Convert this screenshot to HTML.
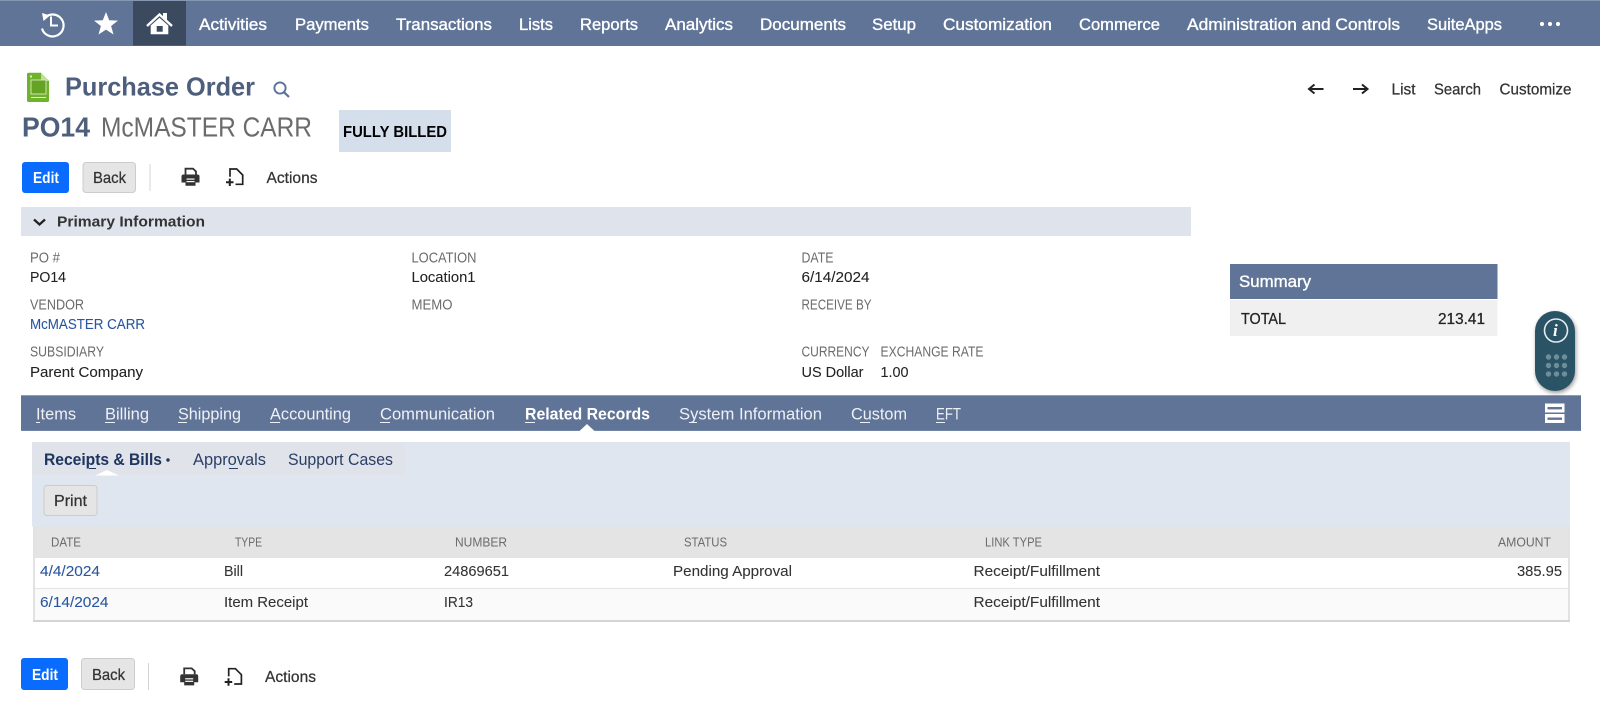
<!DOCTYPE html>
<html lang="en">
<head>
<meta charset="utf-8">
<title>Purchase Order PO14</title>
<style>
html,body{margin:0;padding:0;background:#fff;width:1600px;height:719px;overflow:hidden}
svg{display:block}
text{font-family:"Liberation Sans",Arial,sans-serif}
.nav{font-size:16.8px;fill:#fff;stroke:#fff;stroke-width:.35px}
.tb{font-size:15.8px;fill:#333;stroke:#333;stroke-width:.25px}
.lab{font-size:14.6px;fill:#6b6b6b}
.val{font-size:15.2px;fill:#222;stroke:#222;stroke-width:.08px}
.lnk{font-size:15.2px;fill:#2a56a0;stroke:#2a56a0;stroke-width:.08px}
.tab{font-size:16.8px;fill:#eef1f6}
.sub{font-size:16.8px;fill:#2a3f66}
.th{font-size:13px;fill:#6b6b6b}
.td{font-size:15.2px;fill:#333;stroke:#333;stroke-width:.08px}
</style>
</head>
<body>
<svg xmlns="http://www.w3.org/2000/svg" width="1600" height="719" viewBox="0 0 1600 719">
<rect width="1600" height="719" fill="#fff"/>

<!-- Top navigation -->
<rect x="0" y="0" width="1600" height="46" fill="#607497"/>
<rect x="0" y="0" width="1600" height="1" fill="#8697b2"/>
<rect x="133" y="1" width="53" height="44.5" fill="#3c4a60"/>
<g fill="none" stroke="#fff" stroke-width="2.2">
  <path d="M44.5 18 A11 11 0 1 1 42 28.5"/>
  <path d="M51 16.5 V25.5 H58" stroke-width="2"/>
</g>
<path d="M42 13 L50 15.5 L43.5 21 Z" fill="#fff"/>
<polygon fill="#fff" points="106,12 109.2,20.2 118,20.6 111.1,26 113.5,34.5 106,29.6 98.5,34.5 100.9,26 94,20.6 102.8,20.2"/>
<path d="M163 13 H167 V21 L163 17 Z" fill="#fff"/>
<path d="M147 26 L159.5 14.5 L172 26" fill="none" stroke="#fff" stroke-width="2.4"/>
<path d="M150.7 25.5 L159.5 17.8 L168.3 25.5 V34.3 H150.7 Z" fill="#fff"/>
<rect x="156.7" y="26" width="6" height="5.7" fill="#3c4a60"/>
<text class="nav" x="199" y="30" textLength="68" lengthAdjust="spacingAndGlyphs">Activities</text>
<text class="nav" x="295" y="30" textLength="74" lengthAdjust="spacingAndGlyphs">Payments</text>
<text class="nav" x="396" y="30" textLength="96" lengthAdjust="spacingAndGlyphs">Transactions</text>
<text class="nav" x="519" y="30" textLength="34" lengthAdjust="spacingAndGlyphs">Lists</text>
<text class="nav" x="580" y="30" textLength="58" lengthAdjust="spacingAndGlyphs">Reports</text>
<text class="nav" x="665" y="30" textLength="68" lengthAdjust="spacingAndGlyphs">Analytics</text>
<text class="nav" x="760" y="30" textLength="86" lengthAdjust="spacingAndGlyphs">Documents</text>
<text class="nav" x="872" y="30" textLength="44" lengthAdjust="spacingAndGlyphs">Setup</text>
<text class="nav" x="943" y="30" textLength="109" lengthAdjust="spacingAndGlyphs">Customization</text>
<text class="nav" x="1079" y="30" textLength="81" lengthAdjust="spacingAndGlyphs">Commerce</text>
<text class="nav" x="1187" y="30" textLength="213" lengthAdjust="spacingAndGlyphs">Administration and Controls</text>
<text class="nav" x="1427" y="30" textLength="75" lengthAdjust="spacingAndGlyphs">SuiteApps</text>
<g fill="#fff"><circle cx="1542" cy="24" r="2.1"/><circle cx="1550" cy="24" r="2.1"/><circle cx="1558" cy="24" r="2.1"/></g>

<!-- Title block -->
<path d="M28.5 72.7 H41 L49 81 V100.5 a1.5 1.5 0 0 1 -1.5 1.5 H28.5 a1.5 1.5 0 0 1 -1.5 -1.5 V74.2 a1.5 1.5 0 0 1 1.5 -1.5Z" fill="#6fb22c"/>
<path d="M41 72.7 L49 81 H41Z" fill="#c3dc9b"/>
<rect x="30" y="75.5" width="2" height="2" fill="#e4f0d0"/>
<rect x="31" y="80" width="15" height="14" fill="#64a324" stroke="#cfe4ad" stroke-width="1"/>
<rect x="31" y="97" width="15" height="1" fill="#e4f0d0"/>
<text x="65" y="95.5" font-size="26" font-weight="700" fill="#4d5f7d" textLength="190" lengthAdjust="spacingAndGlyphs">Purchase Order</text>
<circle cx="280" cy="88" r="5.6" fill="none" stroke="#5a7199" stroke-width="1.9"/>
<path d="M284 92.2 L289 97" stroke="#5a7199" stroke-width="2.2" fill="none"/>
<text x="22" y="136.5" font-size="27.5" font-weight="700" fill="#4d5f7d" textLength="68" lengthAdjust="spacingAndGlyphs">PO14</text>
<text x="101" y="136.5" font-size="27.5" fill="#6b6b6b" textLength="211" lengthAdjust="spacingAndGlyphs">McMASTER CARR</text>
<rect x="339" y="110" width="112" height="42" fill="#d5dfec"/>
<text x="343" y="137" font-size="15.8" font-weight="700" fill="#000" textLength="104" lengthAdjust="spacingAndGlyphs">FULLY BILLED</text>

<path d="M1309 89 H1323.5 M1314.5 84.5 L1309 89 L1314.5 93.5" fill="none" stroke="#222" stroke-width="2"/>
<path d="M1353 89 H1367.5 M1362 84.5 L1367.5 89 L1362 93.5" fill="none" stroke="#222" stroke-width="2"/>
<text class="tb" x="1391.5" y="94.5" textLength="24" lengthAdjust="spacingAndGlyphs">List</text>
<text class="tb" x="1434" y="94.5" textLength="47" lengthAdjust="spacingAndGlyphs">Search</text>
<text class="tb" x="1499.5" y="94.5" textLength="72" lengthAdjust="spacingAndGlyphs">Customize</text>

<!-- Top toolbar -->
<rect x="22" y="162" width="47" height="31" rx="3" fill="#0a6cff"/>
<text x="33" y="183" font-size="15.8" font-weight="700" fill="#fff" textLength="26" lengthAdjust="spacingAndGlyphs">Edit</text>
<rect x="83" y="162.5" width="52.5" height="30" rx="3" fill="#e5e5e5" stroke="#ccc"/>
<text class="tb" x="93" y="183" textLength="33" lengthAdjust="spacingAndGlyphs">Back</text>
<rect x="149.5" y="164" width="1" height="27" fill="#d5d5d5"/>
<g>
  <path d="M185.5 174.5 V168.7 H193 L196 171.5 V174.5" fill="none" stroke="#333" stroke-width="1.8"/>
  <path d="M183.5 174.5 H197.5 a2 2 0 0 1 2 2 V182.5 H195.5 V185.7 H185.5 V182.5 H181.5 V176.5 a2 2 0 0 1 2 -2Z" fill="#333"/>
  <rect x="186.5" y="178.5" width="8" height="1.2" fill="#fff"/>
  <rect x="186.5" y="181" width="8" height="1.2" fill="#fff"/>
  <path d="M230 176.7 V169 H236.7 L242.7 175 V184.3 H235.5" fill="none" stroke="#222" stroke-width="1.7"/>
  <path d="M226 182.3 H233.5 M229.8 178.6 V186" fill="none" stroke="#222" stroke-width="2"/>
</g>
<text class="tb" x="266.5" y="183" textLength="51" lengthAdjust="spacingAndGlyphs">Actions</text>

<!-- Primary information -->
<rect x="21" y="207" width="1170" height="29" fill="#dfe4ec"/>
<path d="M34 219.5 L39.5 224.5 L45 219.5" fill="none" stroke="#222" stroke-width="2.3"/>
<text x="57" y="226.5" font-size="15" font-weight="700" fill="#333" textLength="148" lengthAdjust="spacingAndGlyphs">Primary Information</text>

<text class="lab" x="30" y="262.5" textLength="30" lengthAdjust="spacingAndGlyphs">PO #</text>
<text class="val" x="30" y="282" textLength="36" lengthAdjust="spacingAndGlyphs">PO14</text>
<text class="lab" x="30" y="309.5" textLength="54" lengthAdjust="spacingAndGlyphs">VENDOR</text>
<text class="lnk" x="30" y="329" textLength="115" lengthAdjust="spacingAndGlyphs">McMASTER CARR</text>
<text class="lab" x="30" y="356.5" textLength="74" lengthAdjust="spacingAndGlyphs">SUBSIDIARY</text>
<text class="val" x="30" y="377" textLength="113" lengthAdjust="spacingAndGlyphs">Parent Company</text>

<text class="lab" x="411.5" y="262.5" textLength="65" lengthAdjust="spacingAndGlyphs">LOCATION</text>
<text class="val" x="411.5" y="282" textLength="64" lengthAdjust="spacingAndGlyphs">Location1</text>
<text class="lab" x="411.5" y="309.5" textLength="41" lengthAdjust="spacingAndGlyphs">MEMO</text>

<text class="lab" x="801.5" y="262.5" textLength="32" lengthAdjust="spacingAndGlyphs">DATE</text>
<text class="val" x="801.5" y="282" textLength="68" lengthAdjust="spacingAndGlyphs">6/14/2024</text>
<text class="lab" x="801.5" y="309.5" textLength="70" lengthAdjust="spacingAndGlyphs">RECEIVE BY</text>
<text class="lab" x="801.5" y="356.5" textLength="68" lengthAdjust="spacingAndGlyphs">CURRENCY</text>
<text class="val" x="801.5" y="377" textLength="62" lengthAdjust="spacingAndGlyphs">US Dollar</text>
<text class="lab" x="880.5" y="356.5" textLength="103" lengthAdjust="spacingAndGlyphs">EXCHANGE RATE</text>
<text class="val" x="880.5" y="377" textLength="28" lengthAdjust="spacingAndGlyphs">1.00</text>

<!-- Summary -->
<rect x="1230" y="264" width="267.5" height="35" fill="#607497"/>
<text x="1239" y="287" font-size="16.8" fill="#fff" stroke="#fff" stroke-width=".35" textLength="72" lengthAdjust="spacingAndGlyphs">Summary</text>
<rect x="1230" y="300" width="267.5" height="36" fill="#f0f0f0"/>
<text x="1241" y="324" font-size="15.4" fill="#222" stroke="#222" stroke-width=".25" textLength="45" lengthAdjust="spacingAndGlyphs">TOTAL</text>
<text x="1438" y="324" font-size="15.4" fill="#222" stroke="#222" stroke-width=".25" textLength="47" lengthAdjust="spacingAndGlyphs">213.41</text>

<!-- Tab bar -->
<rect x="21" y="395" width="1560" height="36" fill="#607497"/>
<rect x="21" y="395" width="1560" height="1" fill="#8d9db7"/>
<rect x="21" y="430" width="1560" height="1" fill="#7486a5"/>
<text class="tab" x="36" y="419.5" textLength="40" lengthAdjust="spacingAndGlyphs">Items</text>
<text class="tab" x="105" y="419.5" textLength="44" lengthAdjust="spacingAndGlyphs">Billing</text>
<text class="tab" x="178" y="419.5" textLength="63" lengthAdjust="spacingAndGlyphs">Shipping</text>
<text class="tab" x="270" y="419.5" textLength="81" lengthAdjust="spacingAndGlyphs">Accounting</text>
<text class="tab" x="380" y="419.5" textLength="115" lengthAdjust="spacingAndGlyphs">Communication</text>
<text class="tab" x="525" y="419.5" font-weight="700" style="fill:#fff" textLength="125" lengthAdjust="spacingAndGlyphs">Related Records</text>
<text class="tab" x="679" y="419.5" textLength="143" lengthAdjust="spacingAndGlyphs">System Information</text>
<text class="tab" x="851" y="419.5" textLength="56" lengthAdjust="spacingAndGlyphs">Custom</text>
<text class="tab" x="936" y="419.5" textLength="25" lengthAdjust="spacingAndGlyphs">EFT</text>
<g fill="#eef1f6">
  <rect x="36" y="422" width="4" height="1"/><rect x="105" y="422" width="10" height="1"/>
  <rect x="178" y="422" width="9" height="1"/><rect x="270" y="422" width="10" height="1"/>
  <rect x="380" y="422" width="10" height="1"/><rect x="525" y="422" width="10" height="1"/>
  <rect x="689" y="422" width="8" height="1"/><rect x="860" y="422" width="10" height="1"/>
  <rect x="936" y="422" width="9" height="1"/>
</g>
<path d="M579 431.5 L587 424 L595 431.5Z" fill="#fff"/>
<rect x="1545" y="403.5" width="19.5" height="9" fill="#fff"/>
<rect x="1547.5" y="407" width="14.5" height="2.4" fill="#607497"/>
<rect x="1545" y="414" width="19.5" height="9" fill="#fff"/>
<rect x="1547.5" y="417.5" width="14.5" height="2.4" fill="#607497"/>

<!-- Subtabs panel -->
<rect x="33" y="475" width="1537" height="147" fill="#e2e2e2"/>
<rect x="32" y="442" width="1538" height="84.5" fill="#dfe6ef"/>
<rect x="32" y="442" width="373" height="33" fill="#e0e3ea"/>
<path d="M95 475.5 L107 470 L119 475.5Z" fill="#fff"/>
<text x="44" y="465" font-size="16.8" font-weight="700" fill="#1e3560" textLength="118" lengthAdjust="spacingAndGlyphs">Receipts &amp; Bills</text>
<circle cx="168" cy="460" r="1.7" fill="#1e3560"/>
<text class="sub" x="193" y="465" textLength="73" lengthAdjust="spacingAndGlyphs">Approvals</text>
<text class="sub" x="288" y="465" textLength="105" lengthAdjust="spacingAndGlyphs">Support Cases</text>
<rect x="89" y="468" width="7" height="1" fill="#1e3560"/>
<rect x="229" y="468" width="9" height="1" fill="#2a3f66"/>

<rect x="44" y="485.5" width="53" height="30" rx="3" fill="#e5e5e5" stroke="#ccc"/>
<text class="tb" x="54" y="506" textLength="33" lengthAdjust="spacingAndGlyphs">Print</text>

<!-- Table -->
<rect x="35" y="527" width="1533" height="31" fill="#e4e4e4"/>
<rect x="35" y="558" width="1533" height="30" fill="#fff"/>
<rect x="35" y="588" width="1533" height="1" fill="#e4e4e4"/>
<rect x="35" y="589" width="1533" height="31" fill="#fafafa"/>
<rect x="33" y="620" width="1537" height="2" fill="#d4d4d4"/>

<text class="th" x="51" y="546.5" textLength="30" lengthAdjust="spacingAndGlyphs">DATE</text>
<text class="th" x="235" y="546.5" textLength="27" lengthAdjust="spacingAndGlyphs">TYPE</text>
<text class="th" x="455" y="546.5" textLength="52" lengthAdjust="spacingAndGlyphs">NUMBER</text>
<text class="th" x="684" y="546.5" textLength="43" lengthAdjust="spacingAndGlyphs">STATUS</text>
<text class="th" x="985" y="546.5" textLength="57" lengthAdjust="spacingAndGlyphs">LINK TYPE</text>
<text class="th" x="1498" y="546.5" textLength="53" lengthAdjust="spacingAndGlyphs">AMOUNT</text>

<text class="lnk" x="40" y="576" textLength="60" lengthAdjust="spacingAndGlyphs">4/4/2024</text>
<text class="td" x="224" y="576" textLength="19" lengthAdjust="spacingAndGlyphs">Bill</text>
<text class="td" x="444" y="576" textLength="65" lengthAdjust="spacingAndGlyphs">24869651</text>
<text class="td" x="673" y="576" textLength="119" lengthAdjust="spacingAndGlyphs">Pending Approval</text>
<text class="td" x="973.5" y="576" textLength="126.5" lengthAdjust="spacingAndGlyphs">Receipt/Fulfillment</text>
<text class="td" x="1517" y="576" textLength="45" lengthAdjust="spacingAndGlyphs">385.95</text>

<text class="lnk" x="40" y="607" textLength="68.5" lengthAdjust="spacingAndGlyphs">6/14/2024</text>
<text class="td" x="224" y="607" textLength="84" lengthAdjust="spacingAndGlyphs">Item Receipt</text>
<text class="td" x="444" y="607" textLength="29" lengthAdjust="spacingAndGlyphs">IR13</text>
<text class="td" x="973.5" y="607" textLength="126.5" lengthAdjust="spacingAndGlyphs">Receipt/Fulfillment</text>

<!-- Bottom toolbar -->
<rect x="21" y="658" width="47" height="32" rx="3" fill="#0a6cff"/>
<text x="32" y="680" font-size="15.8" font-weight="700" fill="#fff" textLength="26" lengthAdjust="spacingAndGlyphs">Edit</text>
<rect x="81.5" y="658.5" width="53" height="31" rx="3" fill="#e5e5e5" stroke="#ccc"/>
<text class="tb" x="92" y="680" textLength="33" lengthAdjust="spacingAndGlyphs">Back</text>
<rect x="148" y="663" width="1" height="27" fill="#d5d5d5"/>
<g transform="translate(-1.3,499.7)">
  <path d="M185.5 174.5 V168.7 H193 L196 171.5 V174.5" fill="none" stroke="#333" stroke-width="1.8"/>
  <path d="M183.5 174.5 H197.5 a2 2 0 0 1 2 2 V182.5 H195.5 V185.7 H185.5 V182.5 H181.5 V176.5 a2 2 0 0 1 2 -2Z" fill="#333"/>
  <rect x="186.5" y="178.5" width="8" height="1.2" fill="#fff"/>
  <rect x="186.5" y="181" width="8" height="1.2" fill="#fff"/>
  <path d="M230 176.7 V169 H236.7 L242.7 175 V184.3 H235.5" fill="none" stroke="#222" stroke-width="1.7"/>
  <path d="M226 182.3 H233.5 M229.8 178.6 V186" fill="none" stroke="#222" stroke-width="2"/>
</g>
<text class="tb" x="265" y="682" textLength="51" lengthAdjust="spacingAndGlyphs">Actions</text>

<!-- Floating widget -->
<defs><filter id="sh" x="-40%" y="-20%" width="180%" height="140%"><feDropShadow dx="1" dy="2" stdDeviation="2.2" flood-color="#000" flood-opacity=".4"/></filter></defs>
<rect x="1535" y="311" width="40" height="80" rx="20" fill="#2c5366" filter="url(#sh)"/>
<circle cx="1556" cy="330.5" r="11.5" fill="none" stroke="#e4ecef" stroke-width="1.6"/>
<text x="1553" y="336" font-size="17" font-weight="700" font-style="italic" fill="#fff" style="font-family:'Liberation Serif',serif">i</text>
<g fill="#6e8d9a">
  <circle cx="1548.5" cy="357" r="2.7"/><circle cx="1556.5" cy="357" r="2.7"/><circle cx="1564.5" cy="357" r="2.7"/>
  <circle cx="1548.5" cy="365.5" r="2.7"/><circle cx="1556.5" cy="365.5" r="2.7"/><circle cx="1564.5" cy="365.5" r="2.7"/>
  <circle cx="1548.5" cy="374" r="2.7"/><circle cx="1556.5" cy="374" r="2.7"/><circle cx="1564.5" cy="374" r="2.7"/>
</g>
</svg>
</body>
</html>
